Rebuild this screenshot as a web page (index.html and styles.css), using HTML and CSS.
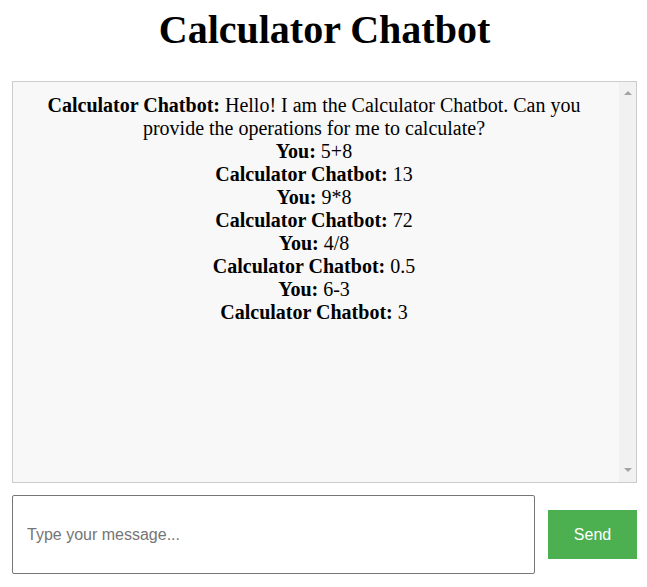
FILE: index.html
```html
<!DOCTYPE html>
<html lang="en">
<head>
<meta charset="utf-8">
<title>Calculator Chatbot</title>
<link rel="stylesheet" href="styles.css">
</head>
<body>
<div class="app">
  <h1 class="title">Calculator Chatbot</h1>
  <div class="chat">
    <div class="log">
      <div class="msg"><b>Calculator Chatbot:</b> Hello! I am the Calculator Chatbot. Can you provide the operations for me to calculate?</div>
      <div class="msg"><b>You:</b> 5+8</div>
      <div class="msg"><b>Calculator Chatbot:</b> 13</div>
      <div class="msg"><b>You:</b> 9*8</div>
      <div class="msg"><b>Calculator Chatbot:</b> 72</div>
      <div class="msg"><b>You:</b> 4/8</div>
      <div class="msg"><b>Calculator Chatbot:</b> 0.5</div>
      <div class="msg"><b>You:</b> 6-3</div>
      <div class="msg"><b>Calculator Chatbot:</b> 3</div>
    </div>
    <div class="scrollbar" aria-hidden="true">
      <span class="arrow arrow-up"></span>
      <span class="arrow arrow-down"></span>
    </div>
  </div>
  <div class="composer">
    <input class="input" type="text" placeholder="Type your message...">
    <button class="send">Send</button>
  </div>
</div>
</body>
</html>
```
FILE: styles.css
```css
html, body {
  margin: 0;
  padding: 0;
  background: #fff;
}
body {
  font-family: "Liberation Serif", "Times New Roman", serif;
  color: #000;
}
.app {
  padding: 0 10px 0 12px;
}
.title {
  margin: 7px 0 28px;
  font-size: 40px;
  font-weight: bold;
  text-align: center;
  line-height: 46px;
}
.chat {
  box-sizing: border-box;
  height: 402px;
  border: 1px solid #ccc;
  background: #f8f8f8;
  display: flex;
  overflow: hidden;
}
.log {
  flex: 1;
  min-width: 0;
  padding: 12px 22px 12px 18px;
  text-align: center;
  font-size: 20px;
  line-height: 23px;
  overflow: hidden;
}
.scrollbar {
  width: 17px;
  flex: none;
  background: #f1f1f1;
  display: flex;
  flex-direction: column;
  justify-content: space-between;
  align-items: center;
  padding: 9px 0 10px;
  box-sizing: border-box;
}
.arrow {
  width: 0;
  height: 0;
  border-left: 4px solid transparent;
  border-right: 4px solid transparent;
}
.arrow-up {
  border-bottom: 4px solid #a3a3a3;
}
.arrow-down {
  border-top: 4px solid #a3a3a3;
}
.composer {
  display: flex;
  align-items: center;
  gap: 13px;
  margin-top: 12px;
}
.input {
  box-sizing: border-box;
  flex: 1;
  height: 79px;
  border: 1px solid #767676;
  border-radius: 2px;
  padding: 0 14px;
  font-family: "Liberation Sans", Arial, sans-serif;
  font-size: 16px;
  color: #000;
  background: #fff;
  outline: none;
}
.input::placeholder {
  color: #757575;
}
.send {
  box-sizing: border-box;
  width: 89px;
  height: 49px;
  border: none;
  background: #4caf50;
  color: #fff;
  font-family: "Liberation Sans", Arial, sans-serif;
  font-size: 16px;
  padding: 0;
  cursor: pointer;
}
```
